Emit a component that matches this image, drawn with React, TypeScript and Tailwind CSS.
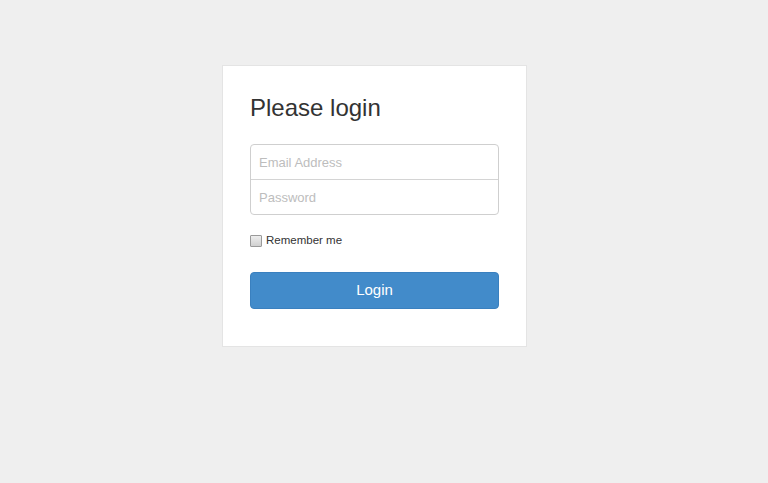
export default function App() {
  return (
    <div
      className="min-h-[483px] w-full bg-[#efefef] pt-[65px]"
      style={{ fontFamily: '"Liberation Sans", Arial, sans-serif' }}
    >
      <div className="ml-[222px] w-[305px] border border-[#e4e4e4] bg-white px-[27px] pt-[29px] pb-[37px]">
        <h1 className="text-[24px] leading-[26px] text-[#333]">Please login</h1>
        <div className="mt-[23px] rounded-[4px] border border-[#cfcfcf]">
          <div className="flex h-[35px] items-center border-b border-[#d4d4d4] px-[8px] pt-[1px] text-[13px] text-[#bdbdbd]">
            Email Address
          </div>
          <div className="flex h-[34px] items-center px-[8px] pt-[1px] text-[13px] text-[#bdbdbd]">
            Password
          </div>
        </div>
        <div className="mt-[18px] flex h-[16px] items-center">
          <div className="h-[12px] w-[12px] rounded-[1px] border border-[#9a9a9a] bg-gradient-to-b from-[#eeeeee] to-[#d0d0d0]" />
          <span className="ml-[4px] text-[11.5px] text-[#333]">Remember me</span>
        </div>
        <div className="mt-[23px] flex h-[37px] items-center justify-center rounded-[4px] border border-[#3a80bf] bg-[#428bca] text-[15px] text-white">
          Login
        </div>
      </div>
    </div>
  );
}
